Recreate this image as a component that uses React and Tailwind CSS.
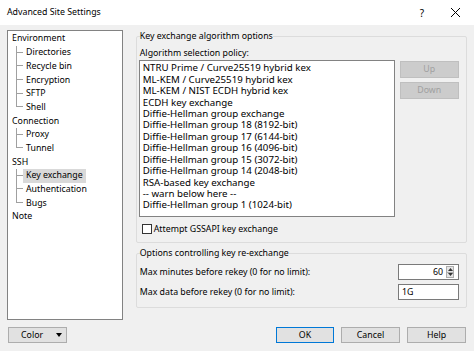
import React from 'react';

const tree = [
  { label: 'Environment', children: ['Directories', 'Recycle bin', 'Encryption', 'SFTP', 'Shell'] },
  { label: 'Connection', children: ['Proxy', 'Tunnel'] },
  { label: 'SSH', children: ['Key exchange', 'Authentication', 'Bugs'] },
  { label: 'Note', children: [] },
];

const algorithms = [
  'NTRU Prime / Curve25519 hybrid kex',
  'ML-KEM / Curve25519 hybrid kex',
  'ML-KEM / NIST ECDH hybrid kex',
  'ECDH key exchange',
  'Diffie-Hellman group exchange',
  'Diffie-Hellman group 18 (8192-bit)',
  'Diffie-Hellman group 17 (6144-bit)',
  'Diffie-Hellman group 16 (4096-bit)',
  'Diffie-Hellman group 15 (3072-bit)',
  'Diffie-Hellman group 14 (2048-bit)',
  'RSA-based key exchange',
  '-- warn below here --',
  'Diffie-Hellman group 1 (1024-bit)',
];

const TreeChild = ({ label, last, selected }) => (
  <div className="flex h-[13.7px] pl-[4px]">
    <div className="flex flex-col w-[7px]">
      <span className="h-1/2 border-l border-b border-[#a0a0a0]" />
      <span className={last ? 'h-1/2' : 'h-1/2 border-l border-[#a0a0a0]'} />
    </div>
    <span className={'flex items-center px-[3px] ' + (selected ? 'bg-[#d9d9d9]' : '')}>{label}</span>
  </div>
);

export default function App() {
  return (
    <div
      className="w-[474px] h-[351px] bg-[#f0f0f0] flex flex-col text-[8.8px] text-black leading-none"
      style={{ fontFamily: '"Noto Sans", sans-serif' }}
    >
      {/* title bar */}
      <div className="h-[25px] bg-white flex items-center pl-[7px] pr-[13px] text-[8.8px]">
        <span className="flex-1">Advanced Site Settings</span>
        <span className="w-[20px] text-center text-[10px]">?</span>
        <span className="ml-[18px] flex">
          <svg width="11" height="11" viewBox="0 0 11 11">
            <path d="M1 1 L10 10 M10 1 L1 10" stroke="#000" strokeWidth="1" />
          </svg>
        </span>
      </div>

      <div className="flex px-[7px] pt-[5px]">
        {/* tree */}
        <div className="w-[116px] h-[290px] bg-white border border-[#828282] pt-[1px] pl-[4px]">
          {tree.map((node) => (
            <div key={node.label}>
              <div className="h-[13.7px] flex items-center">{node.label}</div>
              {node.children.map((c, i) => (
                <TreeChild
                  key={c}
                  label={c}
                  last={i === node.children.length - 1}
                  selected={c === 'Key exchange'}
                />
              ))}
            </div>
          ))}
        </div>

        {/* right panel */}
        <div className="ml-[13px] w-[332px] flex flex-col">
          <fieldset className="h-[213px] border border-[#dcdcdc] rounded-[2px] px-[2px]">
            <legend className="ml-[1px] px-0 h-[12px] leading-[12px]">Key exchange algorithm options</legend>
            <div className="flex items-center h-[14px] mt-[4px] ml-[1px]">Algorithm selection policy:</div>
            <div className="flex">
              <div className="w-[256px] h-[157px] bg-white border border-[#828282] pt-[1px] pl-[3px] text-[9.7px]">
                {algorithms.map((a) => (
                  <div key={a} className="h-[11.44px] leading-[11px] flex items-center">{a}</div>
                ))}
              </div>
              <div className="flex flex-col ml-[5px] mt-[1px] gap-[4px]">
                <button className="w-[59px] h-[17px] bg-[#cccccc] border border-[#bfbfbf] text-[#a0a0a0] flex items-center justify-center">Up</button>
                <button className="w-[59px] h-[17px] bg-[#cccccc] border border-[#bfbfbf] text-[#a0a0a0] flex items-center justify-center">Down</button>
              </div>
            </div>
            <label className="flex items-center mt-[7px] ml-[3px] h-[10px]">
              <span className="w-[10px] h-[10px] border border-[#333333] bg-white" />
              <span className="ml-[2px]">Attempt GSSAPI key exchange</span>
            </label>
          </fieldset>

          <fieldset className="mt-[4px] h-[61px] border border-[#dcdcdc] rounded-[2px] px-[2px]">
            <legend className="ml-[1px] px-0 h-[12px] leading-[12px]">Options controlling key re-exchange</legend>
            <div className="flex items-center h-[16px] mt-[5px]">
              <span className="flex-1 ml-[1px]">Max minutes before rekey (0 for no limit):</span>
              <div className="w-[61px] h-[16px] bg-white border border-[#7a7a7a] flex items-center justify-end mr-[5px]">
                <span className="mr-[3px]">60</span>
                <div className="flex flex-col w-[8px] h-[12px] mr-[4px] border border-[#adadad]">
                  <span className="flex-1 bg-[#e5e5e5] border-b border-[#adadad] flex items-center justify-center">
                    <svg width="5" height="3" viewBox="0 0 5 3"><path d="M0 3 L2.5 0 L5 3 Z" fill="#333" /></svg>
                  </span>
                  <span className="flex-1 bg-[#e5e5e5] flex items-center justify-center">
                    <svg width="5" height="3" viewBox="0 0 5 3"><path d="M0 0 L2.5 3 L5 0 Z" fill="#333" /></svg>
                  </span>
                </div>
              </div>
            </div>
            <div className="flex items-center h-[16px] mt-[4px]">
              <span className="flex-1 ml-[1px]">Max data before rekey (0 for no limit):</span>
              <div className="w-[61px] h-[16px] bg-white border border-[#7a7a7a] flex items-center mr-[5px] pl-[3px]">
                1G
              </div>
            </div>
          </fieldset>
        </div>
      </div>

      {/* bottom buttons */}
      <div className="flex items-center mt-[7px] pl-[8px] pr-[8px]">
        <button className="w-[59px] h-[16px] bg-[#e1e1e1] border border-[#adadad] flex items-center justify-between pl-[12px] pr-[4px]">
          <span>Color</span>
          <svg width="6" height="4" viewBox="0 0 6 4"><path d="M0 0 L6 0 L3 4 Z" fill="#000" /></svg>
        </button>
        <div className="flex-1" />
        <button className="w-[58px] h-[16px] bg-[#e1e1e1] border border-[#0078d7] flex items-center justify-center">OK</button>
        <button className="w-[59px] h-[16px] ml-[7px] bg-[#e1e1e1] border border-[#adadad] flex items-center justify-center">Cancel</button>
        <button className="w-[59px] h-[16px] ml-[7px] bg-[#e1e1e1] border border-[#adadad] flex items-center justify-center">Help</button>
      </div>
    </div>
  );
}
